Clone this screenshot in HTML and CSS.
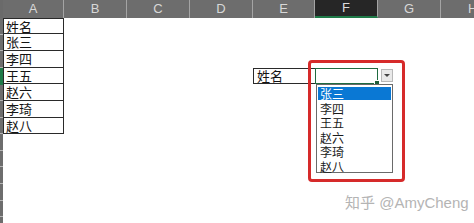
FILE: index.html
```html
<!DOCTYPE html>
<html lang="zh">
<head>
<meta charset="utf-8">
<link rel="stylesheet" href="styles.css">
</head>
<body>
<div class="sheet">
  <div class="corner"></div>
  <div class="colhead">A</div>
  <div class="colhead">B</div>
  <div class="colhead">C</div>
  <div class="colhead">D</div>
  <div class="colhead">E</div>
  <div class="colhead active">F</div>
  <div class="colhead">G</div>
  <div class="colhead last">H</div>

  <div class="rowheads"></div>

  <div class="cell a r1 first">姓名</div>
  <div class="cell a r2">张三</div>
  <div class="cell a r3">李四</div>
  <div class="cell a r4">王五</div>
  <div class="cell a r5">赵六</div>
  <div class="cell a r6">李琦</div>
  <div class="cell a r7">赵八</div>

  <div class="cell e4">姓名</div>
  <div class="cell f4"><span class="handle"></span></div>
  <div class="dropbtn"><span class="arrow"></span></div>

  <ul class="droplist">
    <li class="selected">张三</li>
    <li>李四</li>
    <li>王五</li>
    <li>赵六</li>
    <li>李琦</li>
    <li>赵八</li>
  </ul>

  <div class="highlight"></div>
  <div class="watermark">知乎 @AmyCheng</div>
</div>
</body>
</html>
```

FILE: styles.css
```css
html, body {
  margin: 0;
  padding: 0;
  background: #ffffff;
}

.sheet {
  position: relative;
  width: 474px;
  height: 223px;
  overflow: hidden;
  display: grid;
  grid-template-columns: 3px 61px 63px 63px 63px 62px 63px 63px 33px;
  grid-template-rows: 18px 16px 17px 17px 16px 17px 17px 16px 1fr;
  font-family: "Noto Sans CJK SC", "Noto Sans", sans-serif;
}

.corner {
  grid-column: 1;
  grid-row: 1;
  background: #6a6a6a;
}

.colhead {
  grid-row: 1;
  background: #6d6d6d;
  border-right: 1px solid #a4a4a4;
  color: #d8d8d8;
  font-family: "Liberation Sans", Arial, sans-serif;
  font-size: 13px;
  line-height: 18px;
  text-align: center;
  box-sizing: border-box;
}

.colhead.active {
  background: #262626;
  border-bottom: 2px solid #1f7a48;
  line-height: 16px;
  color: #dcdcdc;
}

.colhead.last {
  border-right: none;
  text-align: left;
  padding-left: 27px;
}

.rowheads {
  grid-column: 1;
  grid-row: 2 / 10;
  background:
    linear-gradient(#1f7a48, #1f7a48) 0 50px / 3px 17px no-repeat,
    repeating-linear-gradient(to bottom, #6d6d6d 0, #6d6d6d 15.6px, #b4b4b4 15.6px, #b4b4b4 16.6px);
}

.cell {
  box-sizing: border-box;
  font-size: 13px;
  line-height: 15px;
  color: #141414;
  padding-left: 2px;
  overflow: hidden;
  white-space: nowrap;
}

.cell.a {
  grid-column: 2;
  border-left: 1px solid #2a2a2a;
  border-right: 1px solid #2a2a2a;
  border-bottom: 1px solid #2a2a2a;
}

.cell.a.first {
  border-top: 1px solid #2a2a2a;
}

.r1 { grid-row: 2; }
.r2 { grid-row: 3; }
.r3 { grid-row: 4; }
.r4 { grid-row: 5; }
.r5 { grid-row: 6; }
.r6 { grid-row: 7; }
.r7 { grid-row: 8; }

.cell.e4 {
  grid-column: 6;
  grid-row: 5;
  border: 1px solid #2a2a2a;
  border-right: none;
  line-height: 14px;
  padding-left: 3px;
}

.cell.f4 {
  grid-column: 7;
  grid-row: 5;
  border: 1px solid #1f6b40;
  position: relative;
  overflow: visible;
}

.handle {
  position: absolute;
  right: -3px;
  bottom: -3px;
  width: 4px;
  height: 4px;
  background: #1f5e3a;
  border: 1px solid #ffffff;
}

.dropbtn {
  position: absolute;
  left: 381px;
  top: 69px;
  width: 12px;
  height: 13px;
  box-sizing: border-box;
  background: #e9e9e9;
  border: 1px solid #b8b8b8;
  display: flex;
  align-items: center;
  justify-content: center;
}

.arrow {
  width: 0;
  height: 0;
  border-left: 3px solid transparent;
  border-right: 3px solid transparent;
  border-top: 3px solid #444444;
}

.droplist {
  position: absolute;
  left: 316px;
  top: 84px;
  width: 77px;
  height: 89px;
  box-sizing: border-box;
  margin: 0;
  padding: 2px 1px 0 1px;
  list-style: none;
  background: #ffffff;
  border: 1px solid #6a6a6a;
  font-size: 12px;
  color: #1a1a1a;
}

.droplist li {
  height: 14.5px;
  line-height: 14px;
  padding-left: 2px;
}

.droplist li.selected {
  background: #0a78d4;
  color: #ffffff;
  height: 13px;
  line-height: 13px;
  margin-bottom: 1.5px;
}

.highlight {
  position: absolute;
  left: 308px;
  top: 60px;
  width: 97px;
  height: 122px;
  box-sizing: border-box;
  border: 3px solid #d62a2a;
  border-radius: 4px;
}

.watermark {
  position: absolute;
  left: 345px;
  top: 193px;
  font-family: "Liberation Sans", "Noto Sans CJK SC", sans-serif;
  font-size: 15px;
  line-height: 20px;
  color: #b4b4b4;
  white-space: nowrap;
}
```
